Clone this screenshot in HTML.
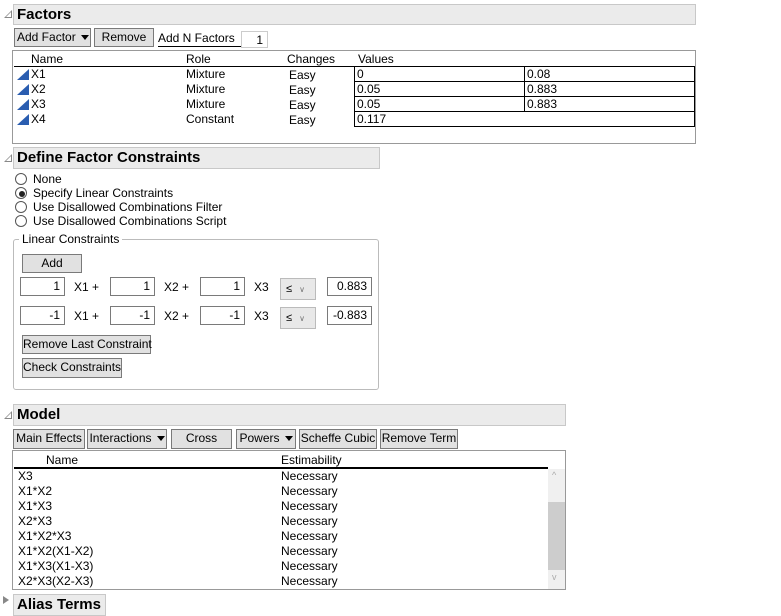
<!DOCTYPE html>
<html><head><meta charset="utf-8"><style>
*{box-sizing:border-box;margin:0;padding:0}
body{width:781px;height:602px;background:#fff;font-family:"Liberation Sans",sans-serif;font-size:12px;color:#000;position:relative;overflow:hidden}
.a{position:absolute;white-space:nowrap}
.hdr{position:absolute;background:#ebebeb;border:1px solid #c8c8c8;font-weight:bold;font-size:15px;padding-left:3px;line-height:19px}
.tri{position:absolute;width:0;height:0;border-left:8px solid transparent;border-bottom:8px solid #888}
.tri:after{content:"";position:absolute;left:-6px;top:2px;width:0;height:0;border-left:5px solid transparent;border-bottom:5px solid #fff}
.btn{position:absolute;background:#e1e1e1;border:1px solid #7a7a7a;text-align:center;line-height:16px;white-space:nowrap}
.arr{display:inline-block;width:0;height:0;border-left:4px solid transparent;border-right:4px solid transparent;border-top:5px solid #000;vertical-align:middle;margin-left:5px}
.inp{position:absolute;background:#fff;border:1px solid #7a7a7a;text-align:right;padding-right:4px;line-height:16px}
.cell{position:absolute;border:1px solid #000;padding-left:2px;line-height:14px;background:#fff}
.ic{position:absolute;width:0;height:0;border-left:12px solid transparent;border-bottom:11px solid #2a5db0}
.rad{position:absolute;width:12px;height:12px;border:1px solid #555;border-radius:50%;background:#fff}
</style></head><body>

<!-- Factors -->
<div class="tri" style="left:4px;top:10px"></div>
<div class="hdr" style="left:13px;top:4px;width:683px;height:21px">Factors</div>
<div class="btn" style="left:14px;top:28px;width:77px;height:19px;text-align:left;padding-left:2px">Add Factor<span class="arr"></span></div>
<div class="btn" style="left:94px;top:28px;width:60px;height:19px">Remove</div>
<div class="a" style="left:158px;top:31px;border-bottom:1px solid #000;width:83px;line-height:15px">Add N Factors</div>
<div class="inp" style="left:241px;top:31px;width:27px;height:17px;border-color:#ccc">1</div>

<div class="a" style="left:12px;top:50px;width:684px;height:94px;border:1px solid #999"></div>
<div class="a" style="left:31px;top:52px">Name</div>
<div class="a" style="left:186px;top:52px">Role</div>
<div class="a" style="left:287px;top:52px">Changes</div>
<div class="a" style="left:358px;top:52px">Values</div>
<div class="a" style="left:14px;top:66px;width:340px;border-top:1px solid #000"></div>
<div class="a" style="left:354px;top:66px;width:341px;border-top:1px solid #000"></div>

<div class="ic" style="left:17px;top:69px"></div><div class="a" style="left:31px;top:67px">X1</div>
<div class="ic" style="left:17px;top:84px"></div><div class="a" style="left:31px;top:82px">X2</div>
<div class="ic" style="left:17px;top:99px"></div><div class="a" style="left:31px;top:97px">X3</div>
<div class="ic" style="left:17px;top:114px"></div><div class="a" style="left:31px;top:112px">X4</div>
<div class="a" style="left:186px;top:67px">Mixture</div>
<div class="a" style="left:186px;top:82px">Mixture</div>
<div class="a" style="left:186px;top:97px">Mixture</div>
<div class="a" style="left:186px;top:112px">Constant</div>
<div class="a" style="left:289px;top:68px">Easy</div>
<div class="a" style="left:289px;top:83px">Easy</div>
<div class="a" style="left:289px;top:98px">Easy</div>
<div class="a" style="left:289px;top:113px">Easy</div>

<div class="cell" style="left:354px;top:66px;width:171px;height:16px">0</div>
<div class="cell" style="left:524px;top:66px;width:171px;height:16px">0.08</div>
<div class="cell" style="left:354px;top:81px;width:171px;height:16px">0.05</div>
<div class="cell" style="left:524px;top:81px;width:171px;height:16px">0.883</div>
<div class="cell" style="left:354px;top:96px;width:171px;height:16px">0.05</div>
<div class="cell" style="left:524px;top:96px;width:171px;height:16px">0.883</div>
<div class="cell" style="left:354px;top:111px;width:341px;height:16px">0.117</div>

<!-- Define Factor Constraints -->
<div class="tri" style="left:4px;top:154px"></div>
<div class="hdr" style="left:13px;top:147px;width:367px;height:22px">Define Factor Constraints</div>
<div class="rad" style="left:15px;top:173px"></div><div class="a" style="left:33px;top:172px">None</div>
<div class="rad" style="left:15px;top:187px"></div><div class="a" style="left:19px;top:191px;width:6px;height:6px;border-radius:50%;background:#222"></div><div class="a" style="left:33px;top:186px">Specify Linear Constraints</div>
<div class="rad" style="left:15px;top:201px"></div><div class="a" style="left:33px;top:200px">Use Disallowed Combinations Filter</div>
<div class="rad" style="left:15px;top:215px"></div><div class="a" style="left:33px;top:214px">Use Disallowed Combinations Script</div>

<div class="a" style="left:13px;top:239px;width:366px;height:151px;border:1px solid #bbb;border-radius:3px"></div>
<div class="a" style="left:19px;top:232px;background:#fff;padding:0 3px">Linear Constraints</div>
<div class="btn" style="left:22px;top:254px;width:60px;height:19px">Add</div>

<div class="inp" style="left:20px;top:277px;width:45px;height:19px;line-height:17px">1</div>
<div class="a" style="left:74px;top:280px">X1 +</div>
<div class="inp" style="left:110px;top:277px;width:45px;height:19px;line-height:17px">1</div>
<div class="a" style="left:164px;top:280px">X2 +</div>
<div class="inp" style="left:200px;top:277px;width:45px;height:19px;line-height:17px">1</div>
<div class="a" style="left:254px;top:280px">X3</div>
<div class="a" style="left:280px;top:278px;width:36px;height:22px;background:#e8e8e8;border:1px solid #bbb;font-size:11px;line-height:20px;padding-left:5px">≤ <span style="font-size:8px;color:#777;margin-left:4px">∨</span></div>
<div class="inp" style="left:327px;top:277px;width:45px;height:19px;line-height:17px">0.883</div>

<div class="inp" style="left:20px;top:306px;width:45px;height:19px;line-height:17px">-1</div>
<div class="a" style="left:74px;top:309px">X1 +</div>
<div class="inp" style="left:110px;top:306px;width:45px;height:19px;line-height:17px">-1</div>
<div class="a" style="left:164px;top:309px">X2 +</div>
<div class="inp" style="left:200px;top:306px;width:45px;height:19px;line-height:17px">-1</div>
<div class="a" style="left:254px;top:309px">X3</div>
<div class="a" style="left:280px;top:307px;width:36px;height:22px;background:#e8e8e8;border:1px solid #bbb;font-size:11px;line-height:20px;padding-left:5px">≤ <span style="font-size:8px;color:#777;margin-left:4px">∨</span></div>
<div class="inp" style="left:327px;top:306px;width:45px;height:19px;line-height:17px">-0.883</div>

<div class="btn" style="left:22px;top:335px;width:129px;height:19px">Remove Last Constraint</div>
<div class="btn" style="left:22px;top:358px;width:100px;height:20px">Check Constraints</div>

<!-- Model -->
<div class="tri" style="left:4px;top:411px"></div>
<div class="hdr" style="left:13px;top:404px;width:553px;height:22px">Model</div>
<div class="btn" style="left:13px;top:429px;width:72px;height:20px">Main Effects</div>
<div class="btn" style="left:87px;top:429px;width:80px;height:20px">Interactions<span class="arr"></span></div>
<div class="btn" style="left:171px;top:429px;width:61px;height:20px">Cross</div>
<div class="btn" style="left:236px;top:429px;width:60px;height:20px">Powers<span class="arr"></span></div>
<div class="btn" style="left:299px;top:429px;width:78px;height:20px">Scheffe Cubic</div>
<div class="btn" style="left:380px;top:429px;width:78px;height:20px">Remove Term</div>

<div class="a" style="left:12px;top:450px;width:554px;height:140px;border:1px solid #999"></div>
<div class="a" style="left:46px;top:453px">Name</div>
<div class="a" style="left:281px;top:453px">Estimability</div>
<div class="a" style="left:14px;top:467px;width:534px;border-top:2px solid #000"></div>
<div class="a" style="left:548px;top:469px;width:17px;height:120px;background:#f0f0f0"></div>
<div class="a" style="left:548px;top:502px;width:17px;height:68px;background:#cdcdcd"></div>
<div class="a" style="left:552px;top:470px;font-size:9px;color:#aaa">^</div>
<div class="a" style="left:552px;top:572px;font-size:9px;color:#aaa">v</div>

<div class="a" style="left:18px;top:469px">X3</div><div class="a" style="left:281px;top:469px">Necessary</div>
<div class="a" style="left:18px;top:484px">X1*X2</div><div class="a" style="left:281px;top:484px">Necessary</div>
<div class="a" style="left:18px;top:499px">X1*X3</div><div class="a" style="left:281px;top:499px">Necessary</div>
<div class="a" style="left:18px;top:514px">X2*X3</div><div class="a" style="left:281px;top:514px">Necessary</div>
<div class="a" style="left:18px;top:529px">X1*X2*X3</div><div class="a" style="left:281px;top:529px">Necessary</div>
<div class="a" style="left:18px;top:544px">X1*X2(X1-X2)</div><div class="a" style="left:281px;top:544px">Necessary</div>
<div class="a" style="left:18px;top:559px">X1*X3(X1-X3)</div><div class="a" style="left:281px;top:559px">Necessary</div>
<div class="a" style="left:18px;top:574px">X2*X3(X2-X3)</div><div class="a" style="left:281px;top:574px">Necessary</div>

<div class="a" style="left:3px;top:596px;width:0;height:0;border-top:4px solid transparent;border-bottom:4px solid transparent;border-left:6px solid #888"></div>
<div class="hdr" style="left:13px;top:594px;width:93px;height:22px">Alias Terms</div>
</body></html>
